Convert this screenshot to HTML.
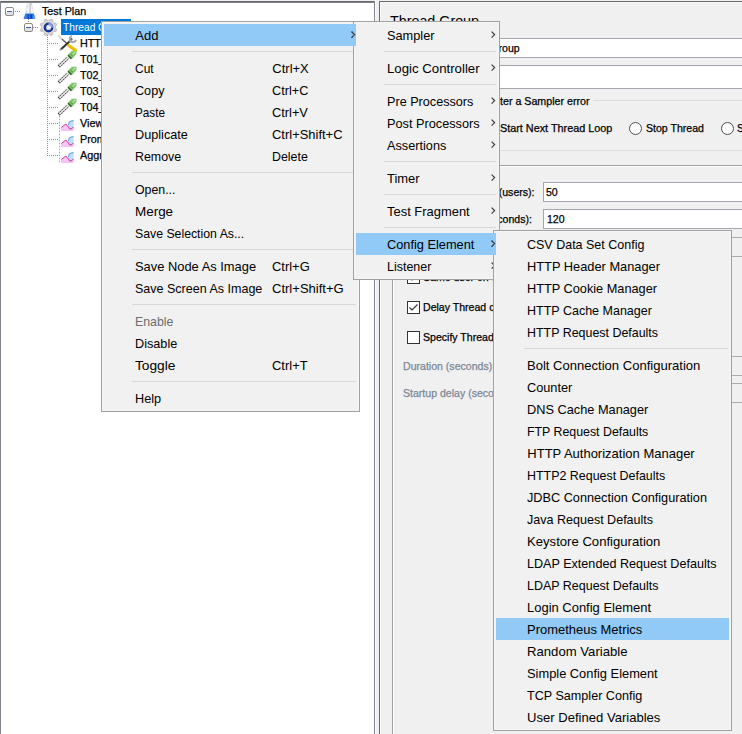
<!DOCTYPE html>
<html><head><meta charset="utf-8">
<style>
*{margin:0;padding:0;box-sizing:border-box}
html,body{width:742px;height:734px;overflow:hidden;background:#f0f0f0;font-family:"Liberation Sans",sans-serif;color:#000;position:relative}
.a{position:absolute}
.t{position:absolute;white-space:pre;line-height:20px;height:20px}
</style></head><body>
<div class="a" style="left:0px;top:1px;width:375px;height:733px;background:#ffffff;"></div>
<div class="a" style="left:0px;top:1px;width:376px;height:1px;background:#666666;"></div>
<div class="a" style="left:1px;top:2px;width:375px;height:1px;background:#7f848e;"></div>
<div class="a" style="left:0px;top:1px;width:1px;height:733px;background:#7f848c;"></div>
<div class="a" style="left:374px;top:1px;width:1px;height:733px;background:#82868e;"></div>
<div class="a" style="left:375px;top:0px;width:1px;height:734px;background:#fafafa;"></div>
<div class="a" style="left:5px;top:7px;width:9px;height:9px;border:1px solid #8a8a8a;border-radius:2px;background:linear-gradient(#fff 0,#fff 55%,#e6e6e6 60%,#dcdcdc 100%)"></div>
<div class="a" style="left:7px;top:11px;width:5px;height:1px;background:#3c5ca8;"></div>
<div class="a" style="left:24px;top:23px;width:9px;height:9px;border:1px solid #8a8a8a;border-radius:2px;background:linear-gradient(#fff 0,#fff 55%,#e6e6e6 60%,#dcdcdc 100%)"></div>
<div class="a" style="left:26px;top:27px;width:5px;height:1px;background:#3c5ca8;"></div>
<div class="a" style="left:15px;top:11px;width:1px;height:1px;background:#8c8c8c;"></div>
<div class="a" style="left:17px;top:11px;width:1px;height:1px;background:#8c8c8c;"></div>
<div class="a" style="left:19px;top:11px;width:1px;height:1px;background:#8c8c8c;"></div>
<div class="a" style="left:28px;top:19px;width:1px;height:1px;background:#8c8c8c;"></div>
<div class="a" style="left:28px;top:21px;width:1px;height:1px;background:#8c8c8c;"></div>
<div class="a" style="left:33px;top:27px;width:1px;height:1px;background:#8c8c8c;"></div>
<div class="a" style="left:35px;top:27px;width:1px;height:1px;background:#8c8c8c;"></div>
<div class="a" style="left:37px;top:27px;width:1px;height:1px;background:#8c8c8c;"></div>
<div class="a" style="left:47px;top:35px;width:1px;height:1px;background:#8c8c8c;"></div>
<div class="a" style="left:47px;top:37px;width:1px;height:1px;background:#8c8c8c;"></div>
<div class="a" style="left:47px;top:39px;width:1px;height:1px;background:#8c8c8c;"></div>
<div class="a" style="left:47px;top:41px;width:1px;height:1px;background:#8c8c8c;"></div>
<div class="a" style="left:47px;top:43px;width:1px;height:1px;background:#8c8c8c;"></div>
<div class="a" style="left:47px;top:45px;width:1px;height:1px;background:#8c8c8c;"></div>
<div class="a" style="left:47px;top:47px;width:1px;height:1px;background:#8c8c8c;"></div>
<div class="a" style="left:47px;top:49px;width:1px;height:1px;background:#8c8c8c;"></div>
<div class="a" style="left:47px;top:51px;width:1px;height:1px;background:#8c8c8c;"></div>
<div class="a" style="left:47px;top:53px;width:1px;height:1px;background:#8c8c8c;"></div>
<div class="a" style="left:47px;top:55px;width:1px;height:1px;background:#8c8c8c;"></div>
<div class="a" style="left:47px;top:57px;width:1px;height:1px;background:#8c8c8c;"></div>
<div class="a" style="left:47px;top:59px;width:1px;height:1px;background:#8c8c8c;"></div>
<div class="a" style="left:47px;top:61px;width:1px;height:1px;background:#8c8c8c;"></div>
<div class="a" style="left:47px;top:63px;width:1px;height:1px;background:#8c8c8c;"></div>
<div class="a" style="left:47px;top:65px;width:1px;height:1px;background:#8c8c8c;"></div>
<div class="a" style="left:47px;top:67px;width:1px;height:1px;background:#8c8c8c;"></div>
<div class="a" style="left:47px;top:69px;width:1px;height:1px;background:#8c8c8c;"></div>
<div class="a" style="left:47px;top:71px;width:1px;height:1px;background:#8c8c8c;"></div>
<div class="a" style="left:47px;top:73px;width:1px;height:1px;background:#8c8c8c;"></div>
<div class="a" style="left:47px;top:75px;width:1px;height:1px;background:#8c8c8c;"></div>
<div class="a" style="left:47px;top:77px;width:1px;height:1px;background:#8c8c8c;"></div>
<div class="a" style="left:47px;top:79px;width:1px;height:1px;background:#8c8c8c;"></div>
<div class="a" style="left:47px;top:81px;width:1px;height:1px;background:#8c8c8c;"></div>
<div class="a" style="left:47px;top:83px;width:1px;height:1px;background:#8c8c8c;"></div>
<div class="a" style="left:47px;top:85px;width:1px;height:1px;background:#8c8c8c;"></div>
<div class="a" style="left:47px;top:87px;width:1px;height:1px;background:#8c8c8c;"></div>
<div class="a" style="left:47px;top:89px;width:1px;height:1px;background:#8c8c8c;"></div>
<div class="a" style="left:47px;top:91px;width:1px;height:1px;background:#8c8c8c;"></div>
<div class="a" style="left:47px;top:93px;width:1px;height:1px;background:#8c8c8c;"></div>
<div class="a" style="left:47px;top:95px;width:1px;height:1px;background:#8c8c8c;"></div>
<div class="a" style="left:47px;top:97px;width:1px;height:1px;background:#8c8c8c;"></div>
<div class="a" style="left:47px;top:99px;width:1px;height:1px;background:#8c8c8c;"></div>
<div class="a" style="left:47px;top:101px;width:1px;height:1px;background:#8c8c8c;"></div>
<div class="a" style="left:47px;top:103px;width:1px;height:1px;background:#8c8c8c;"></div>
<div class="a" style="left:47px;top:105px;width:1px;height:1px;background:#8c8c8c;"></div>
<div class="a" style="left:47px;top:107px;width:1px;height:1px;background:#8c8c8c;"></div>
<div class="a" style="left:47px;top:109px;width:1px;height:1px;background:#8c8c8c;"></div>
<div class="a" style="left:47px;top:111px;width:1px;height:1px;background:#8c8c8c;"></div>
<div class="a" style="left:47px;top:113px;width:1px;height:1px;background:#8c8c8c;"></div>
<div class="a" style="left:47px;top:115px;width:1px;height:1px;background:#8c8c8c;"></div>
<div class="a" style="left:47px;top:117px;width:1px;height:1px;background:#8c8c8c;"></div>
<div class="a" style="left:47px;top:119px;width:1px;height:1px;background:#8c8c8c;"></div>
<div class="a" style="left:47px;top:121px;width:1px;height:1px;background:#8c8c8c;"></div>
<div class="a" style="left:47px;top:123px;width:1px;height:1px;background:#8c8c8c;"></div>
<div class="a" style="left:47px;top:125px;width:1px;height:1px;background:#8c8c8c;"></div>
<div class="a" style="left:47px;top:127px;width:1px;height:1px;background:#8c8c8c;"></div>
<div class="a" style="left:47px;top:129px;width:1px;height:1px;background:#8c8c8c;"></div>
<div class="a" style="left:47px;top:131px;width:1px;height:1px;background:#8c8c8c;"></div>
<div class="a" style="left:47px;top:133px;width:1px;height:1px;background:#8c8c8c;"></div>
<div class="a" style="left:47px;top:135px;width:1px;height:1px;background:#8c8c8c;"></div>
<div class="a" style="left:47px;top:137px;width:1px;height:1px;background:#8c8c8c;"></div>
<div class="a" style="left:47px;top:139px;width:1px;height:1px;background:#8c8c8c;"></div>
<div class="a" style="left:47px;top:141px;width:1px;height:1px;background:#8c8c8c;"></div>
<div class="a" style="left:47px;top:143px;width:1px;height:1px;background:#8c8c8c;"></div>
<div class="a" style="left:47px;top:145px;width:1px;height:1px;background:#8c8c8c;"></div>
<div class="a" style="left:47px;top:147px;width:1px;height:1px;background:#8c8c8c;"></div>
<div class="a" style="left:47px;top:149px;width:1px;height:1px;background:#8c8c8c;"></div>
<div class="a" style="left:47px;top:151px;width:1px;height:1px;background:#8c8c8c;"></div>
<div class="a" style="left:47px;top:153px;width:1px;height:1px;background:#8c8c8c;"></div>
<div class="a" style="left:47px;top:155px;width:1px;height:1px;background:#8c8c8c;"></div>
<div class="a" style="left:49px;top:43px;width:1px;height:1px;background:#8c8c8c;"></div>
<div class="a" style="left:51px;top:43px;width:1px;height:1px;background:#8c8c8c;"></div>
<div class="a" style="left:53px;top:43px;width:1px;height:1px;background:#8c8c8c;"></div>
<div class="a" style="left:55px;top:43px;width:1px;height:1px;background:#8c8c8c;"></div>
<div class="a" style="left:57px;top:43px;width:1px;height:1px;background:#8c8c8c;"></div>
<div class="a" style="left:49px;top:59px;width:1px;height:1px;background:#8c8c8c;"></div>
<div class="a" style="left:51px;top:59px;width:1px;height:1px;background:#8c8c8c;"></div>
<div class="a" style="left:53px;top:59px;width:1px;height:1px;background:#8c8c8c;"></div>
<div class="a" style="left:55px;top:59px;width:1px;height:1px;background:#8c8c8c;"></div>
<div class="a" style="left:57px;top:59px;width:1px;height:1px;background:#8c8c8c;"></div>
<div class="a" style="left:49px;top:75px;width:1px;height:1px;background:#8c8c8c;"></div>
<div class="a" style="left:51px;top:75px;width:1px;height:1px;background:#8c8c8c;"></div>
<div class="a" style="left:53px;top:75px;width:1px;height:1px;background:#8c8c8c;"></div>
<div class="a" style="left:55px;top:75px;width:1px;height:1px;background:#8c8c8c;"></div>
<div class="a" style="left:57px;top:75px;width:1px;height:1px;background:#8c8c8c;"></div>
<div class="a" style="left:49px;top:91px;width:1px;height:1px;background:#8c8c8c;"></div>
<div class="a" style="left:51px;top:91px;width:1px;height:1px;background:#8c8c8c;"></div>
<div class="a" style="left:53px;top:91px;width:1px;height:1px;background:#8c8c8c;"></div>
<div class="a" style="left:55px;top:91px;width:1px;height:1px;background:#8c8c8c;"></div>
<div class="a" style="left:57px;top:91px;width:1px;height:1px;background:#8c8c8c;"></div>
<div class="a" style="left:49px;top:107px;width:1px;height:1px;background:#8c8c8c;"></div>
<div class="a" style="left:51px;top:107px;width:1px;height:1px;background:#8c8c8c;"></div>
<div class="a" style="left:53px;top:107px;width:1px;height:1px;background:#8c8c8c;"></div>
<div class="a" style="left:55px;top:107px;width:1px;height:1px;background:#8c8c8c;"></div>
<div class="a" style="left:57px;top:107px;width:1px;height:1px;background:#8c8c8c;"></div>
<div class="a" style="left:49px;top:123px;width:1px;height:1px;background:#8c8c8c;"></div>
<div class="a" style="left:51px;top:123px;width:1px;height:1px;background:#8c8c8c;"></div>
<div class="a" style="left:53px;top:123px;width:1px;height:1px;background:#8c8c8c;"></div>
<div class="a" style="left:55px;top:123px;width:1px;height:1px;background:#8c8c8c;"></div>
<div class="a" style="left:57px;top:123px;width:1px;height:1px;background:#8c8c8c;"></div>
<div class="a" style="left:49px;top:139px;width:1px;height:1px;background:#8c8c8c;"></div>
<div class="a" style="left:51px;top:139px;width:1px;height:1px;background:#8c8c8c;"></div>
<div class="a" style="left:53px;top:139px;width:1px;height:1px;background:#8c8c8c;"></div>
<div class="a" style="left:55px;top:139px;width:1px;height:1px;background:#8c8c8c;"></div>
<div class="a" style="left:57px;top:139px;width:1px;height:1px;background:#8c8c8c;"></div>
<div class="a" style="left:49px;top:155px;width:1px;height:1px;background:#8c8c8c;"></div>
<div class="a" style="left:51px;top:155px;width:1px;height:1px;background:#8c8c8c;"></div>
<div class="a" style="left:53px;top:155px;width:1px;height:1px;background:#8c8c8c;"></div>
<div class="a" style="left:55px;top:155px;width:1px;height:1px;background:#8c8c8c;"></div>
<div class="a" style="left:57px;top:155px;width:1px;height:1px;background:#8c8c8c;"></div>
<div class="a" style="left:59px;top:115px;width:1px;height:48px;background:#e4e4e4;"></div>
<div class="a" style="left:59px;top:116px;width:1px;height:1px;background:#a8a8a8;"></div>
<div class="a" style="left:59px;top:119px;width:1px;height:1px;background:#a8a8a8;"></div>
<div class="a" style="left:59px;top:122px;width:1px;height:1px;background:#a8a8a8;"></div>
<div class="a" style="left:59px;top:125px;width:1px;height:1px;background:#a8a8a8;"></div>
<div class="a" style="left:59px;top:128px;width:1px;height:1px;background:#a8a8a8;"></div>
<div class="a" style="left:59px;top:131px;width:1px;height:1px;background:#a8a8a8;"></div>
<div class="a" style="left:59px;top:134px;width:1px;height:1px;background:#a8a8a8;"></div>
<div class="a" style="left:59px;top:137px;width:1px;height:1px;background:#a8a8a8;"></div>
<div class="a" style="left:59px;top:140px;width:1px;height:1px;background:#a8a8a8;"></div>
<div class="a" style="left:59px;top:143px;width:1px;height:1px;background:#a8a8a8;"></div>
<div class="a" style="left:59px;top:146px;width:1px;height:1px;background:#a8a8a8;"></div>
<div class="a" style="left:59px;top:149px;width:1px;height:1px;background:#a8a8a8;"></div>
<div class="a" style="left:59px;top:152px;width:1px;height:1px;background:#a8a8a8;"></div>
<div class="a" style="left:59px;top:155px;width:1px;height:1px;background:#a8a8a8;"></div>
<div class="a" style="left:59px;top:158px;width:1px;height:1px;background:#a8a8a8;"></div>
<div class="a" style="left:59px;top:161px;width:1px;height:1px;background:#a8a8a8;"></div>
<svg class="a" style="left:22px;top:2px" width="16" height="18" viewBox="22 2 16 18">
<path d="M27.2 4 L31.8 4 L33.4 13.8 L25.6 13.8 Z" fill="#f4f4f4" stroke="#d6dde6" stroke-width="0.7"/>
<rect x="29.5" y="3.4" width="1.3" height="10.4" fill="#c4c4c4"/>
<rect x="30.3" y="2.8" width="1.2" height="1.4" fill="#b0b0b0"/>
<rect x="26.6" y="6" width="1" height="1.4" fill="#b8d4f0"/>
<rect x="26.2" y="11" width="1" height="1.4" fill="#b8d4f0"/>
<path d="M25.2 13.6 L33.8 13.6 L35.2 19 L23.8 19 Z" fill="#2f7fe8"/>
<rect x="27.4" y="14.2" width="1.8" height="4.8" fill="#0d52c6"/>
<rect x="30.2" y="14.2" width="2" height="4.8" fill="#0a4ab8"/>
<rect x="23.8" y="16.6" width="1.2" height="2.4" fill="#6c66c8"/>
<rect x="33.4" y="15.4" width="1.8" height="3.6" fill="#66a4f2"/>
</svg>
<svg class="a" style="left:38px;top:18px" width="22" height="19" viewBox="38 18 22 19"><rect x="47.1" y="18.8" width="2.8" height="3.6" rx="0.8" transform="rotate(22.5 48.5 27.3)" fill="#dedede" stroke="#aaaaaa" stroke-width="0.7"/><rect x="47.1" y="18.8" width="2.8" height="3.6" rx="0.8" transform="rotate(67.5 48.5 27.3)" fill="#dedede" stroke="#aaaaaa" stroke-width="0.7"/><rect x="47.1" y="18.8" width="2.8" height="3.6" rx="0.8" transform="rotate(112.5 48.5 27.3)" fill="#dedede" stroke="#aaaaaa" stroke-width="0.7"/><rect x="47.1" y="18.8" width="2.8" height="3.6" rx="0.8" transform="rotate(157.5 48.5 27.3)" fill="#dedede" stroke="#aaaaaa" stroke-width="0.7"/><rect x="47.1" y="18.8" width="2.8" height="3.6" rx="0.8" transform="rotate(202.5 48.5 27.3)" fill="#dedede" stroke="#aaaaaa" stroke-width="0.7"/><rect x="47.1" y="18.8" width="2.8" height="3.6" rx="0.8" transform="rotate(247.5 48.5 27.3)" fill="#dedede" stroke="#aaaaaa" stroke-width="0.7"/><rect x="47.1" y="18.8" width="2.8" height="3.6" rx="0.8" transform="rotate(292.5 48.5 27.3)" fill="#dedede" stroke="#aaaaaa" stroke-width="0.7"/><rect x="47.1" y="18.8" width="2.8" height="3.6" rx="0.8" transform="rotate(337.5 48.5 27.3)" fill="#dedede" stroke="#aaaaaa" stroke-width="0.7"/>
<circle cx="48.5" cy="27.3" r="6.9" fill="#e2e2e2" stroke="#b4b4b4" stroke-width="0.7"/>
<circle cx="48.5" cy="27.5" r="4.9" fill="#1a3590"/>
<path d="M48.5 22.8 A4.7 4.7 0 0 1 53.2 27.5 L48.5 27.5 Z" fill="#8a9ae4"/>
<circle cx="48.6" cy="27.4" r="2.6" fill="#b8c4e8"/>
<path d="M47.2 24.9 L51.4 27.5 L47.2 30.1 Z" fill="#f4f6fc"/>
</svg>
<svg class="a" style="left:56px;top:34px" width="22" height="18" viewBox="56 34 22 18">
<path d="M58.6 36 L63.5 40.6" stroke="#d8d8d8" stroke-width="2" stroke-linecap="round"/>
<path d="M62 39.2 L67.8 44.4" stroke="#8a8a8a" stroke-width="1.5"/>
<path d="M62.4 39.4 L67.6 44" stroke="#262626" stroke-width="1" stroke-dasharray="1 0.9"/>
<path d="M61 49.2 L69.8 41.2" stroke="#333333" stroke-width="2.1"/>
<path d="M59.8 50.4 L61.4 48.9" stroke="#a0a0a0" stroke-width="1.8"/>
<path d="M68.8 45.4 L75.6 50.3" stroke="#f2c400" stroke-width="3.1" stroke-linecap="round"/>
<path d="M69.4 46.8 L75.2 50.9" stroke="#d49a00" stroke-width="0.6"/>
<path d="M69.2 41.6 L72.4 38.6" stroke="#9a9a9a" stroke-width="2.2"/>
<path d="M71.8 35.9 A3.2 3.2 0 1 0 76 39.9" fill="none" stroke="#a8a8a8" stroke-width="2"/>
<path d="M72.6 37 L73.6 39.4" stroke="#f0f0f0" stroke-width="0.9"/>
<path d="M70.6 39.6 L72 38.4" stroke="#3a3a3a" stroke-width="1"/>
</svg>
<svg class="a" style="left:56px;top:49px" width="22" height="19" viewBox="56 49 22 19">
<path d="M58.8 66.4 L68.2 57.6" stroke="#9a9a9a" stroke-width="3.2"/>
<path d="M58.8 66.4 L68.2 57.6" stroke="#3a3a3a" stroke-width="3.2" stroke-dasharray="1 1.6"/>
<path d="M59.4 65.9 L68 57.8" stroke="#ffffff" stroke-width="1.3"/>
<path d="M67.8 54.8 L72 50.7 L76.6 50.8 L76.4 54 L72.5 58.6 L70 58.8 Z" fill="#7cc66a"/>
<path d="M72.4 54.4 L75.6 51.6" stroke="#b2e49c" stroke-width="1.3"/>
<path d="M67.9 55.3 L71.6 58.6" stroke="#2f5e2c" stroke-width="1.5"/>
<path d="M70.8 54.4 L72.8 55.9" stroke="#8a6a3a" stroke-width="0.9"/>
</svg>
<svg class="a" style="left:56px;top:65px" width="22" height="19" viewBox="56 65 22 19">
<path d="M58.8 82.4 L68.2 73.6" stroke="#9a9a9a" stroke-width="3.2"/>
<path d="M58.8 82.4 L68.2 73.6" stroke="#3a3a3a" stroke-width="3.2" stroke-dasharray="1 1.6"/>
<path d="M59.4 81.9 L68 73.8" stroke="#ffffff" stroke-width="1.3"/>
<path d="M67.8 70.8 L72 66.7 L76.6 66.8 L76.4 70 L72.5 74.6 L70 74.8 Z" fill="#7cc66a"/>
<path d="M72.4 70.4 L75.6 67.6" stroke="#b2e49c" stroke-width="1.3"/>
<path d="M67.9 71.3 L71.6 74.6" stroke="#2f5e2c" stroke-width="1.5"/>
<path d="M70.8 70.4 L72.8 71.9" stroke="#8a6a3a" stroke-width="0.9"/>
</svg>
<svg class="a" style="left:56px;top:81px" width="22" height="19" viewBox="56 81 22 19">
<path d="M58.8 98.4 L68.2 89.6" stroke="#9a9a9a" stroke-width="3.2"/>
<path d="M58.8 98.4 L68.2 89.6" stroke="#3a3a3a" stroke-width="3.2" stroke-dasharray="1 1.6"/>
<path d="M59.4 97.9 L68 89.8" stroke="#ffffff" stroke-width="1.3"/>
<path d="M67.8 86.8 L72 82.7 L76.6 82.8 L76.4 86 L72.5 90.6 L70 90.8 Z" fill="#7cc66a"/>
<path d="M72.4 86.4 L75.6 83.6" stroke="#b2e49c" stroke-width="1.3"/>
<path d="M67.9 87.3 L71.6 90.6" stroke="#2f5e2c" stroke-width="1.5"/>
<path d="M70.8 86.4 L72.8 87.9" stroke="#8a6a3a" stroke-width="0.9"/>
</svg>
<svg class="a" style="left:56px;top:97px" width="22" height="19" viewBox="56 97 22 19">
<path d="M58.8 114.4 L68.2 105.6" stroke="#9a9a9a" stroke-width="3.2"/>
<path d="M58.8 114.4 L68.2 105.6" stroke="#3a3a3a" stroke-width="3.2" stroke-dasharray="1 1.6"/>
<path d="M59.4 113.9 L68 105.8" stroke="#ffffff" stroke-width="1.3"/>
<path d="M67.8 102.8 L72 98.7 L76.6 98.8 L76.4 102 L72.5 106.6 L70 106.8 Z" fill="#7cc66a"/>
<path d="M72.4 102.4 L75.6 99.6" stroke="#b2e49c" stroke-width="1.3"/>
<path d="M67.9 103.3 L71.6 106.6" stroke="#2f5e2c" stroke-width="1.5"/>
<path d="M70.8 102.4 L72.8 103.9" stroke="#8a6a3a" stroke-width="0.9"/>
</svg>
<svg class="a" style="left:58px;top:116px" width="18" height="16" viewBox="58 116 18 16">
<path d="M68 125 Q69 120.5 73.5 120.3 L73.5 129 L68 129 Z" fill="#c4daf8"/>
<path d="M68.2 125 Q69 120.8 73.5 120.6" fill="none" stroke="#66a8f0" stroke-width="1.1"/>
<path d="M61 127.5 L66 124 L70 129.3 L73.8 127.2 L73.8 131 L61 131 Z" fill="#f9c2f2"/>
<path d="M61.3 127.4 L66 124 L70 129.3 L73.6 127.2" fill="none" stroke="#c8409f" stroke-width="1.0"/>
</svg>
<svg class="a" style="left:58px;top:132px" width="18" height="16" viewBox="58 132 18 16">
<path d="M68 141 Q69 136.5 73.5 136.3 L73.5 145 L68 145 Z" fill="#c4daf8"/>
<path d="M68.2 141 Q69 136.8 73.5 136.6" fill="none" stroke="#66a8f0" stroke-width="1.1"/>
<path d="M61 143.5 L66 140 L70 145.3 L73.8 143.2 L73.8 147 L61 147 Z" fill="#f9c2f2"/>
<path d="M61.3 143.4 L66 140 L70 145.3 L73.6 143.2" fill="none" stroke="#c8409f" stroke-width="1.0"/>
</svg>
<svg class="a" style="left:58px;top:148px" width="18" height="16" viewBox="58 148 18 16">
<path d="M68 157 Q69 152.5 73.5 152.3 L73.5 161 L68 161 Z" fill="#c4daf8"/>
<path d="M68.2 157 Q69 152.8 73.5 152.6" fill="none" stroke="#66a8f0" stroke-width="1.1"/>
<path d="M61 159.5 L66 156 L70 161.3 L73.8 159.2 L73.8 163 L61 163 Z" fill="#f9c2f2"/>
<path d="M61.3 159.4 L66 156 L70 161.3 L73.6 159.2" fill="none" stroke="#c8409f" stroke-width="1.0"/>
</svg>
<div class="t" style="left:42.00px;top:1.19px;font-size:11px;color:#000;transform:scaleX(0.9768);transform-origin:0 0;-webkit-text-stroke:0.25px currentColor;">Test Plan</div>
<div class="a" style="left:61px;top:19px;width:70px;height:16px;background:#0078d7;"></div>
<div class="t" style="left:63.00px;top:17.19px;font-size:11px;color:#fff;transform:scaleX(0.9266);transform-origin:0 0;">Thread</div>
<div class="t" style="left:97.60px;top:17.19px;font-size:11px;color:#fff;transform:scaleX(0.9800);transform-origin:0 0;">Group</div>
<div class="t" style="left:80.00px;top:33.19px;font-size:11px;color:#000;transform:scaleX(0.9800);transform-origin:0 0;-webkit-text-stroke:0.25px currentColor;">HTTP Request Defaults</div>
<div class="t" style="left:80.00px;top:49.19px;font-size:11px;color:#000;transform:scaleX(0.9800);transform-origin:0 0;-webkit-text-stroke:0.25px currentColor;">T01_Home</div>
<div class="t" style="left:80.00px;top:65.19px;font-size:11px;color:#000;transform:scaleX(0.9800);transform-origin:0 0;-webkit-text-stroke:0.25px currentColor;">T02_Login</div>
<div class="t" style="left:80.00px;top:81.19px;font-size:11px;color:#000;transform:scaleX(0.9800);transform-origin:0 0;-webkit-text-stroke:0.25px currentColor;">T03_Browse</div>
<div class="t" style="left:80.00px;top:97.19px;font-size:11px;color:#000;transform:scaleX(0.9800);transform-origin:0 0;-webkit-text-stroke:0.25px currentColor;">T04_Logout</div>
<div class="t" style="left:80.00px;top:113.19px;font-size:11px;color:#000;transform:scaleX(0.9800);transform-origin:0 0;-webkit-text-stroke:0.25px currentColor;">View Results Tree</div>
<div class="t" style="left:80.00px;top:129.19px;font-size:11px;color:#000;transform:scaleX(0.9800);transform-origin:0 0;-webkit-text-stroke:0.25px currentColor;">Prometheus Listener</div>
<div class="t" style="left:80.00px;top:145.19px;font-size:11px;color:#000;transform:scaleX(0.9800);transform-origin:0 0;-webkit-text-stroke:0.25px currentColor;">Aggregate Report</div>
<div class="a" style="left:376px;top:0px;width:3px;height:734px;background:#f0f0f0;"></div>
<div class="a" style="left:379px;top:1px;width:363px;height:733px;background:#f0f0f0;"></div>
<div class="a" style="left:379px;top:1px;width:363px;height:1px;background:#6a6a6a;"></div>
<div class="a" style="left:379px;top:1px;width:1px;height:733px;background:#6a6a6a;"></div>
<div class="a" style="left:380px;top:2px;width:362px;height:1px;background:#f8f8f8;"></div>
<div class="a" style="left:380px;top:2px;width:1px;height:732px;background:#f8f8f8;"></div>
<div class="t" style="left:390.40px;top:10.80px;font-size:15px;color:#000;transform:scaleX(0.9530);transform-origin:0 0;">Thread Group</div>
<div class="a" style="left:440px;top:38px;width:310px;height:20px;background:#fff;border:1px solid #a2a5ab"></div>
<div class="t" style="left:453.50px;top:38.19px;font-size:11px;color:#000;transform:scaleX(0.9600);transform-origin:0 0;-webkit-text-stroke:0.25px currentColor;">Thread Group</div>
<div class="a" style="left:440px;top:65px;width:310px;height:24px;background:#fff;border:1px solid #a2a5ab"></div>
<div class="a" style="left:392px;top:100px;width:360px;height:1px;background:#dcdcdc;"></div>
<div class="a" style="left:392px;top:100px;width:1px;height:51px;background:#dcdcdc;"></div>
<div class="a" style="left:392px;top:150px;width:360px;height:1px;background:#dcdcdc;"></div>
<div class="a" style="left:400px;top:92px;width:193px;height:16px;background:#f0f0f0;"></div>
<div class="t" style="left:499.90px;top:91.19px;font-size:11px;color:#000;transform:scaleX(0.9695);transform-origin:0 0;-webkit-text-stroke:0.25px currentColor;">ter a Sampler error</div>
<div class="a" style="left:400px;top:122px;width:13px;height:13px;border:1px solid #4d4d4d;border-radius:50%;background:#fff"></div>
<div class="a" style="left:403px;top:125px;width:7px;height:7px;border-radius:50%;background:#333"></div>
<div class="t" style="left:417.00px;top:118.19px;font-size:11px;color:#000;transform:scaleX(0.9600);transform-origin:0 0;-webkit-text-stroke:0.25px currentColor;">Continue</div>
<div class="t" style="left:500.00px;top:118.19px;font-size:11px;color:#000;transform:scaleX(0.9837);transform-origin:0 0;-webkit-text-stroke:0.25px currentColor;">Start Next Thread Loop</div>
<div class="a" style="left:629px;top:122px;width:13px;height:13px;border:1px solid #4d4d4d;border-radius:50%;background:#fff"></div>
<div class="t" style="left:645.70px;top:118.19px;font-size:11px;color:#000;transform:scaleX(0.9612);transform-origin:0 0;-webkit-text-stroke:0.25px currentColor;">Stop Thread</div>
<div class="a" style="left:721px;top:122px;width:13px;height:13px;border:1px solid #4d4d4d;border-radius:50%;background:#fff"></div>
<div class="t" style="left:737.00px;top:118.19px;font-size:11px;color:#000;transform:scaleX(0.9600);transform-origin:0 0;-webkit-text-stroke:0.25px currentColor;">Stop Test</div>
<div class="a" style="left:392px;top:165px;width:360px;height:1px;background:#a0a0a0;"></div>
<div class="a" style="left:393px;top:166px;width:360px;height:1px;background:#ffffff;"></div>
<div class="a" style="left:392px;top:165px;width:1px;height:569px;background:#a0a0a0;"></div>
<div class="a" style="left:393px;top:166px;width:1px;height:568px;background:#ffffff;"></div>
<div class="a" style="left:400px;top:158px;width:100px;height:16px;background:#f0f0f0;"></div>
<div class="t" style="left:404.00px;top:156.19px;font-size:11px;color:#000;transform:scaleX(0.9600);transform-origin:0 0;-webkit-text-stroke:0.25px currentColor;">Thread Properties</div>
<div class="t" style="left:405.49px;top:182.19px;font-size:11px;color:#000;transform:scaleX(0.9600);transform-origin:0 0;-webkit-text-stroke:0.25px currentColor;">Number of Threads (users):</div>
<div class="a" style="left:543px;top:182px;width:210px;height:20px;background:#fff;border:1px solid #a2a5ab"></div>
<div class="t" style="left:546.30px;top:182.19px;font-size:11px;color:#000;transform:scaleX(0.9600);transform-origin:0 0;-webkit-text-stroke:0.25px currentColor;">50</div>
<div class="t" style="left:404.04px;top:209.19px;font-size:11px;color:#000;transform:scaleX(0.9600);transform-origin:0 0;-webkit-text-stroke:0.25px currentColor;">Ramp-up period (seconds):</div>
<div class="a" style="left:543px;top:209px;width:210px;height:20px;background:#fff;border:1px solid #a2a5ab"></div>
<div class="t" style="left:546.60px;top:209.19px;font-size:11px;color:#000;transform:scaleX(0.9600);transform-origin:0 0;-webkit-text-stroke:0.25px currentColor;">120</div>
<div class="a" style="left:407px;top:271px;width:13px;height:13px;border:1px solid #333;background:#fff"></div>
<svg class="a" style="left:407px;top:271px" width="13" height="13" viewBox="0 0 13 13"><path d="M2.5 6.5 L5 9 L10.5 3.5" fill="none" stroke="#333" stroke-width="1.2"/></svg>
<div class="t" style="left:422.70px;top:267.19px;font-size:11px;color:#000;transform:scaleX(0.9600);transform-origin:0 0;-webkit-text-stroke:0.25px currentColor;">Same user on each iteration</div>
<div class="a" style="left:407px;top:301px;width:13px;height:13px;border:1px solid #333;background:#fff"></div>
<svg class="a" style="left:407px;top:301px" width="13" height="13" viewBox="0 0 13 13"><path d="M2.5 6.5 L5 9 L10.5 3.5" fill="none" stroke="#333" stroke-width="1.2"/></svg>
<div class="t" style="left:422.70px;top:297.19px;font-size:11px;color:#000;transform:scaleX(0.9600);transform-origin:0 0;-webkit-text-stroke:0.25px currentColor;">Delay Thread creation until needed</div>
<div class="a" style="left:407px;top:331px;width:13px;height:13px;border:1px solid #333;background:#fff"></div>
<div class="t" style="left:422.70px;top:326.69px;font-size:11px;color:#000;transform:scaleX(0.9600);transform-origin:0 0;-webkit-text-stroke:0.25px currentColor;">Specify Thread lifetime</div>
<div class="a" style="left:520px;top:356px;width:240px;height:20px;background:#f0f0f0;border:1px solid #a8abb0"></div>
<div class="a" style="left:520px;top:383px;width:240px;height:20px;background:#f0f0f0;border:1px solid #a8abb0"></div>
<div class="a" style="left:560px;top:237px;width:200px;height:20px;background:#f0f0f0;border:1px solid #a8abb0"></div>
<div class="t" style="left:402.70px;top:356.19px;font-size:11px;color:#7b8796;transform:scaleX(0.9600);transform-origin:0 0;-webkit-text-stroke:0.25px currentColor;">Duration (seconds):</div>
<div class="t" style="left:402.70px;top:383.19px;font-size:11px;color:#7b8796;transform:scaleX(0.9600);transform-origin:0 0;-webkit-text-stroke:0.25px currentColor;">Startup delay (seconds):</div>
<div class="a" style="left:101px;top:21px;width:259px;height:391px;background:#f1f1f1;border:1px solid #a0a0a0;box-shadow:inset 1px 1px 0 #f6f6f6, inset -1px -1px 0 #f6f6f6"></div>
<div class="a" style="left:104px;top:24px;width:252px;height:22px;background:#91c9f7;"></div>
<div class="t" style="left:135.30px;top:25.50px;font-size:13px;color:#000;">Add</div>
<svg class="a" style="left:351px;top:31px" width="5" height="8" viewBox="0 0 5 8"><path d="M0.6 0.6 L3.6 3.6 L0.6 6.6" fill="none" stroke="#404040" stroke-width="1.25"/></svg>
<div class="a" style="left:132px;top:51px;width:224px;height:1px;background:#d7d7d7;"></div>
<div class="t" style="left:135.30px;top:58.50px;font-size:13px;color:#000;transform:scaleX(0.9192);transform-origin:0 0;">Cut</div>
<div class="t" style="left:272.30px;top:58.50px;font-size:13px;color:#000;">Ctrl+X</div>
<div class="t" style="left:135.30px;top:80.50px;font-size:13px;color:#000;transform:scaleX(0.9717);transform-origin:0 0;">Copy</div>
<div class="t" style="left:272.30px;top:80.50px;font-size:13px;color:#000;transform:scaleX(0.9757);transform-origin:0 0;">Ctrl+C</div>
<div class="t" style="left:135.30px;top:102.50px;font-size:13px;color:#000;transform:scaleX(0.9023);transform-origin:0 0;">Paste</div>
<div class="t" style="left:272.30px;top:102.50px;font-size:13px;color:#000;transform:scaleX(0.9840);transform-origin:0 0;">Ctrl+V</div>
<div class="t" style="left:135.30px;top:124.50px;font-size:13px;color:#000;transform:scaleX(0.9760);transform-origin:0 0;">Duplicate</div>
<div class="t" style="left:272.30px;top:124.50px;font-size:13px;color:#000;transform:scaleX(0.9956);transform-origin:0 0;">Ctrl+Shift+C</div>
<div class="t" style="left:135.30px;top:146.50px;font-size:13px;color:#000;transform:scaleX(0.9520);transform-origin:0 0;">Remove</div>
<div class="t" style="left:272.30px;top:146.50px;font-size:13px;color:#000;transform:scaleX(0.9527);transform-origin:0 0;">Delete</div>
<div class="a" style="left:132px;top:172px;width:224px;height:1px;background:#d7d7d7;"></div>
<div class="t" style="left:135.30px;top:179.50px;font-size:13px;color:#000;transform:scaleX(0.9475);transform-origin:0 0;">Open...</div>
<div class="t" style="left:135.30px;top:201.50px;font-size:13px;color:#000;transform:scaleX(1.0337);transform-origin:0 0;">Merge</div>
<div class="t" style="left:135.30px;top:223.50px;font-size:13px;color:#000;transform:scaleX(0.9444);transform-origin:0 0;">Save Selection As...</div>
<div class="a" style="left:132px;top:249px;width:224px;height:1px;background:#d7d7d7;"></div>
<div class="t" style="left:135.30px;top:256.50px;font-size:13px;color:#000;transform:scaleX(0.9915);transform-origin:0 0;">Save Node As Image</div>
<div class="t" style="left:272.30px;top:256.50px;font-size:13px;color:#000;transform:scaleX(0.9941);transform-origin:0 0;">Ctrl+G</div>
<div class="t" style="left:135.30px;top:278.50px;font-size:13px;color:#000;transform:scaleX(0.9626);transform-origin:0 0;">Save Screen As Image</div>
<div class="t" style="left:272.30px;top:278.50px;font-size:13px;color:#000;transform:scaleX(1.0024);transform-origin:0 0;">Ctrl+Shift+G</div>
<div class="a" style="left:132px;top:304px;width:224px;height:1px;background:#d7d7d7;"></div>
<div class="t" style="left:135.30px;top:311.50px;font-size:13px;color:#6d6d6d;transform:scaleX(0.9460);transform-origin:0 0;">Enable</div>
<div class="t" style="left:135.30px;top:333.50px;font-size:13px;color:#000;transform:scaleX(0.9756);transform-origin:0 0;">Disable</div>
<div class="t" style="left:135.30px;top:355.50px;font-size:13px;color:#000;transform:scaleX(1.0545);transform-origin:0 0;">Toggle</div>
<div class="t" style="left:272.30px;top:355.50px;font-size:13px;color:#000;transform:scaleX(0.9958);transform-origin:0 0;">Ctrl+T</div>
<div class="a" style="left:132px;top:381px;width:224px;height:1px;background:#d7d7d7;"></div>
<div class="t" style="left:135.30px;top:388.50px;font-size:13px;color:#000;transform:scaleX(0.9757);transform-origin:0 0;">Help</div>
<div class="a" style="left:353px;top:21px;width:147px;height:259px;background:#f1f1f1;border:1px solid #a0a0a0;box-shadow:inset 1px 1px 0 #f6f6f6, inset -1px -1px 0 #f6f6f6"></div>
<div class="t" style="left:387.30px;top:25.50px;font-size:13px;color:#000;transform:scaleX(0.9810);transform-origin:0 0;">Sampler</div>
<svg class="a" style="left:491px;top:31px" width="5" height="8" viewBox="0 0 5 8"><path d="M0.6 0.6 L3.6 3.6 L0.6 6.6" fill="none" stroke="#404040" stroke-width="1.25"/></svg>
<div class="a" style="left:384px;top:51px;width:112px;height:1px;background:#d7d7d7;"></div>
<div class="t" style="left:387.30px;top:58.50px;font-size:13px;color:#000;transform:scaleX(1.0171);transform-origin:0 0;">Logic Controller</div>
<svg class="a" style="left:491px;top:64px" width="5" height="8" viewBox="0 0 5 8"><path d="M0.6 0.6 L3.6 3.6 L0.6 6.6" fill="none" stroke="#404040" stroke-width="1.25"/></svg>
<div class="a" style="left:384px;top:84px;width:112px;height:1px;background:#d7d7d7;"></div>
<div class="t" style="left:387.30px;top:91.50px;font-size:13px;color:#000;transform:scaleX(0.9722);transform-origin:0 0;">Pre Processors</div>
<svg class="a" style="left:491px;top:97px" width="5" height="8" viewBox="0 0 5 8"><path d="M0.6 0.6 L3.6 3.6 L0.6 6.6" fill="none" stroke="#404040" stroke-width="1.25"/></svg>
<div class="t" style="left:387.30px;top:113.50px;font-size:13px;color:#000;transform:scaleX(0.9783);transform-origin:0 0;">Post Processors</div>
<svg class="a" style="left:491px;top:119px" width="5" height="8" viewBox="0 0 5 8"><path d="M0.6 0.6 L3.6 3.6 L0.6 6.6" fill="none" stroke="#404040" stroke-width="1.25"/></svg>
<div class="t" style="left:387.30px;top:135.50px;font-size:13px;color:#000;transform:scaleX(0.9769);transform-origin:0 0;">Assertions</div>
<svg class="a" style="left:491px;top:141px" width="5" height="8" viewBox="0 0 5 8"><path d="M0.6 0.6 L3.6 3.6 L0.6 6.6" fill="none" stroke="#404040" stroke-width="1.25"/></svg>
<div class="a" style="left:384px;top:161px;width:112px;height:1px;background:#d7d7d7;"></div>
<div class="t" style="left:387.30px;top:168.50px;font-size:13px;color:#000;transform:scaleX(0.9954);transform-origin:0 0;">Timer</div>
<svg class="a" style="left:491px;top:174px" width="5" height="8" viewBox="0 0 5 8"><path d="M0.6 0.6 L3.6 3.6 L0.6 6.6" fill="none" stroke="#404040" stroke-width="1.25"/></svg>
<div class="a" style="left:384px;top:194px;width:112px;height:1px;background:#d7d7d7;"></div>
<div class="t" style="left:387.30px;top:201.50px;font-size:13px;color:#000;transform:scaleX(0.9953);transform-origin:0 0;">Test Fragment</div>
<svg class="a" style="left:491px;top:207px" width="5" height="8" viewBox="0 0 5 8"><path d="M0.6 0.6 L3.6 3.6 L0.6 6.6" fill="none" stroke="#404040" stroke-width="1.25"/></svg>
<div class="a" style="left:384px;top:227px;width:112px;height:1px;background:#d7d7d7;"></div>
<div class="a" style="left:356px;top:233px;width:140px;height:22px;background:#91c9f7;"></div>
<div class="t" style="left:387.30px;top:234.50px;font-size:13px;color:#000;transform:scaleX(0.9832);transform-origin:0 0;">Config Element</div>
<svg class="a" style="left:491px;top:240px" width="5" height="8" viewBox="0 0 5 8"><path d="M0.6 0.6 L3.6 3.6 L0.6 6.6" fill="none" stroke="#404040" stroke-width="1.25"/></svg>
<div class="t" style="left:387.30px;top:256.50px;font-size:13px;color:#000;transform:scaleX(0.9578);transform-origin:0 0;">Listener</div>
<svg class="a" style="left:491px;top:262px" width="5" height="8" viewBox="0 0 5 8"><path d="M0.6 0.6 L3.6 3.6 L0.6 6.6" fill="none" stroke="#404040" stroke-width="1.25"/></svg>
<div class="a" style="left:353px;top:24px;width:3px;height:22px;background:#91c9f7;"></div>
<svg class="a" style="left:351px;top:31px" width="5" height="8" viewBox="0 0 5 8"><path d="M0.6 0.6 L3.6 3.6 L0.6 6.6" fill="none" stroke="#404040" stroke-width="1.25"/></svg>
<div class="a" style="left:493px;top:230px;width:239px;height:501px;background:#f1f1f1;border:1px solid #a0a0a0;box-shadow:inset 1px 1px 0 #f6f6f6, inset -1px -1px 0 #f6f6f6"></div>
<div class="t" style="left:527.30px;top:234.50px;font-size:13px;color:#000;transform:scaleX(0.9613);transform-origin:0 0;">CSV Data Set Config</div>
<div class="t" style="left:527.30px;top:256.50px;font-size:13px;color:#000;transform:scaleX(0.9861);transform-origin:0 0;">HTTP Header Manager</div>
<div class="t" style="left:527.30px;top:278.50px;font-size:13px;color:#000;transform:scaleX(0.9795);transform-origin:0 0;">HTTP Cookie Manager</div>
<div class="t" style="left:527.30px;top:300.50px;font-size:13px;color:#000;transform:scaleX(0.9620);transform-origin:0 0;">HTTP Cache Manager</div>
<div class="t" style="left:527.30px;top:322.50px;font-size:13px;color:#000;transform:scaleX(0.9559);transform-origin:0 0;">HTTP Request Defaults</div>
<div class="a" style="left:524px;top:348px;width:204px;height:1px;background:#d7d7d7;"></div>
<div class="t" style="left:527.30px;top:355.50px;font-size:13px;color:#000;transform:scaleX(1.0033);transform-origin:0 0;">Bolt Connection Configuration</div>
<div class="t" style="left:527.30px;top:377.50px;font-size:13px;color:#000;transform:scaleX(0.9795);transform-origin:0 0;">Counter</div>
<div class="t" style="left:527.30px;top:399.50px;font-size:13px;color:#000;transform:scaleX(0.9817);transform-origin:0 0;">DNS Cache Manager</div>
<div class="t" style="left:527.30px;top:421.50px;font-size:13px;color:#000;transform:scaleX(0.9502);transform-origin:0 0;">FTP Request Defaults</div>
<div class="t" style="left:527.30px;top:443.50px;font-size:13px;color:#000;">HTTP Authorization Manager</div>
<div class="t" style="left:527.30px;top:465.50px;font-size:13px;color:#000;transform:scaleX(0.9563);transform-origin:0 0;">HTTP2 Request Defaults</div>
<div class="t" style="left:527.30px;top:487.50px;font-size:13px;color:#000;transform:scaleX(0.9768);transform-origin:0 0;">JDBC Connection Configuration</div>
<div class="t" style="left:527.30px;top:509.50px;font-size:13px;color:#000;transform:scaleX(0.9641);transform-origin:0 0;">Java Request Defaults</div>
<div class="t" style="left:527.30px;top:531.50px;font-size:13px;color:#000;transform:scaleX(1.0087);transform-origin:0 0;">Keystore Configuration</div>
<div class="t" style="left:527.30px;top:553.50px;font-size:13px;color:#000;transform:scaleX(0.9688);transform-origin:0 0;">LDAP Extended Request Defaults</div>
<div class="t" style="left:527.30px;top:575.50px;font-size:13px;color:#000;transform:scaleX(0.9594);transform-origin:0 0;">LDAP Request Defaults</div>
<div class="t" style="left:527.30px;top:597.50px;font-size:13px;color:#000;transform:scaleX(0.9975);transform-origin:0 0;">Login Config Element</div>
<div class="a" style="left:496px;top:618px;width:233px;height:22px;background:#91c9f7;"></div>
<div class="t" style="left:527.30px;top:619.50px;font-size:13px;color:#000;transform:scaleX(0.9975);transform-origin:0 0;">Prometheus Metrics</div>
<div class="t" style="left:527.30px;top:641.50px;font-size:13px;color:#000;transform:scaleX(1.0102);transform-origin:0 0;">Random Variable</div>
<div class="t" style="left:527.30px;top:663.50px;font-size:13px;color:#000;transform:scaleX(0.9884);transform-origin:0 0;">Simple Config Element</div>
<div class="t" style="left:527.30px;top:685.50px;font-size:13px;color:#000;transform:scaleX(0.9690);transform-origin:0 0;">TCP Sampler Config</div>
<div class="t" style="left:527.30px;top:707.50px;font-size:13px;color:#000;transform:scaleX(1.0051);transform-origin:0 0;">User Defined Variables</div>
<div class="a" style="left:493px;top:233px;width:3px;height:22px;background:#91c9f7;"></div>
<svg class="a" style="left:491px;top:240px" width="5" height="8" viewBox="0 0 5 8"><path d="M0.6 0.6 L3.6 3.6 L0.6 6.6" fill="none" stroke="#404040" stroke-width="1.25"/></svg>
</body></html>
